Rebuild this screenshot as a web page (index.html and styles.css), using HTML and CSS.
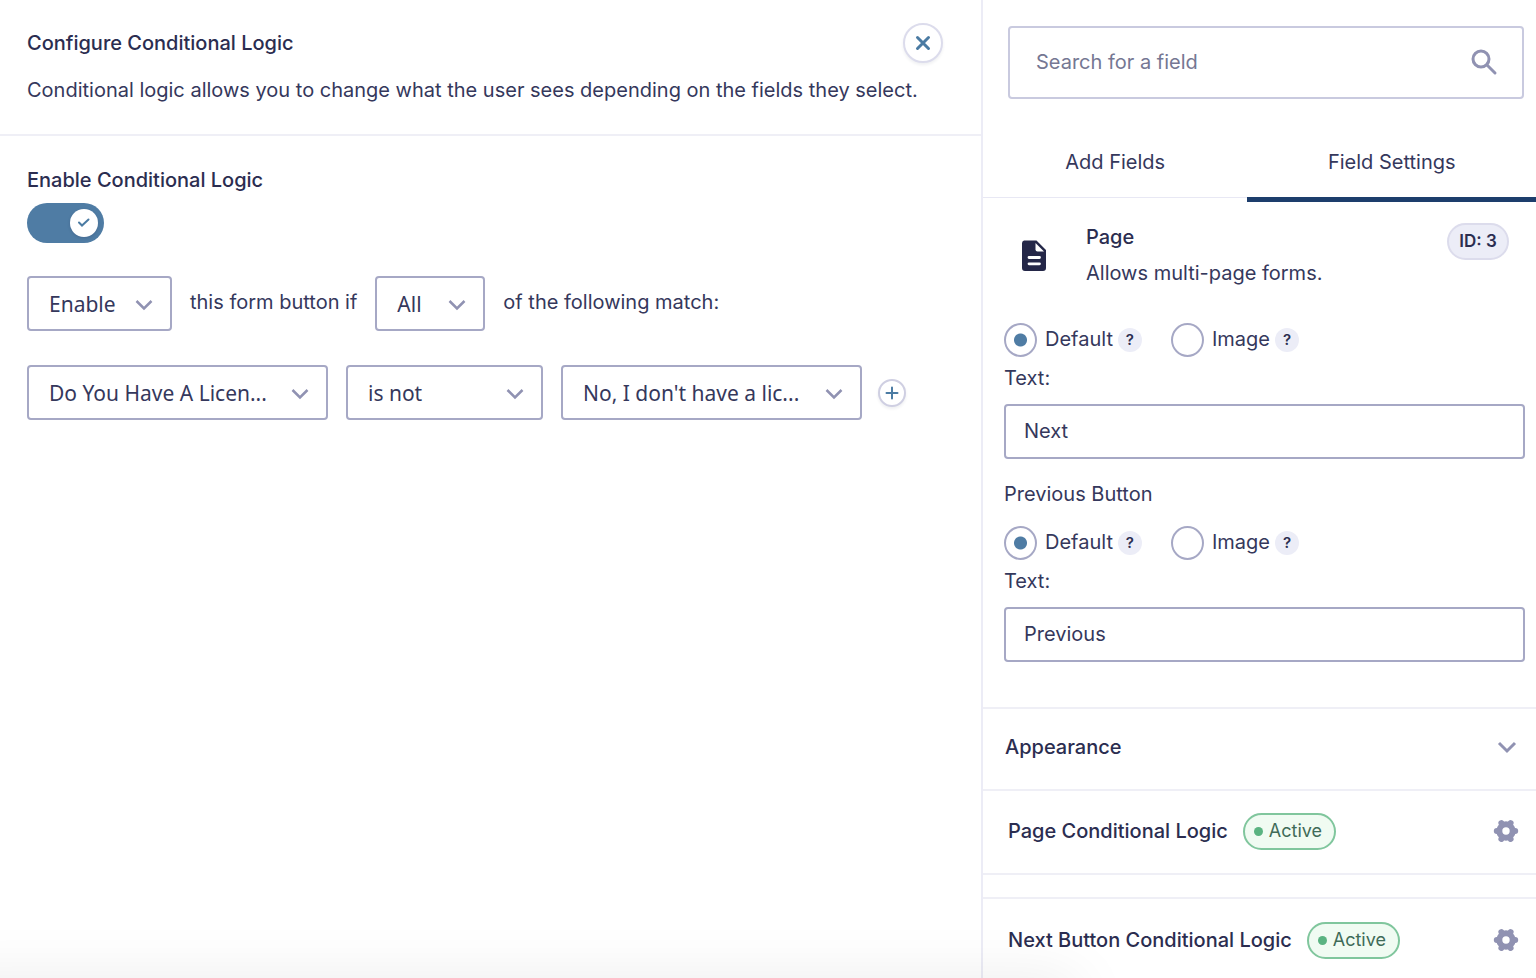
FILE: index.html
```html
<!DOCTYPE html>
<html lang="en">
<head>
  <meta charset="UTF-8" />
  <meta name="viewport" content="width=device-width, initial-scale=1.0"/>
  <title>Configure Conditional Logic</title>
  <link rel="stylesheet" href="styles.css">
</head>
<body>

  <div class="editor">

    <!-- Conditional logic flyout -->
    <main class="flyout">
      <header class="flyout-header">
        <div>
          <h1>Configure Conditional Logic</h1>
          <p>Conditional logic allows you to change what the user sees depending on the fields they select.</p>
        </div>
        <button class="close" type="button" aria-label="Close">
          <svg width="16" height="16" viewBox="0 0 16 16"><path d="M2.500 2.500l11 11M13.500 2.500l-11 11"/></svg>
        </button>
      </header>

      <div class="flyout-body">
        <label class="section-label" for="enableLogic">Enable Conditional Logic</label>
        <div class="toggle">
          <input type="checkbox" id="enableLogic" checked>
          <span class="knob">
            <svg width="14" height="12" viewBox="0 0 14 12"><path d="M2 5.500l3 3 6.500-6"/></svg>
          </span>
        </div>

        <div class="sentence">
          <div class="select enable">
            <select aria-label="Action"><option>Enable</option><option>Disable</option></select>
            <svg width="18" height="12" viewBox="0 0 18 12"><path d="M1.500 2l7.500 7.500 7.500-7.500"/></svg>
          </div>
          <span>this form button if</span>
          <div class="select all">
            <select aria-label="Match type"><option>All</option><option>Any</option></select>
            <svg width="18" height="12" viewBox="0 0 18 12"><path d="M1.500 2l7.500 7.500 7.500-7.500"/></svg>
          </div>
          <span>of the following match:</span>
        </div>

        <div class="rule">
          <div class="select wide">
            <select aria-label="Field"><option>Do You Have A Licen...</option></select>
            <svg width="18" height="12" viewBox="0 0 18 12"><path d="M1.500 2l7.500 7.500 7.500-7.500"/></svg>
          </div>
          <div class="select operator">
            <select aria-label="Operator"><option>is not</option><option>is</option></select>
            <svg width="18" height="12" viewBox="0 0 18 12"><path d="M1.500 2l7.500 7.500 7.500-7.500"/></svg>
          </div>
          <div class="select wide">
            <select aria-label="Value"><option>No, I don't have a lic...</option></select>
            <svg width="18" height="12" viewBox="0 0 18 12"><path d="M1.500 2l7.500 7.500 7.500-7.500"/></svg>
          </div>
          <button class="add" type="button" aria-label="Add rule">
            <svg width="14" height="14" viewBox="0 0 14 14"><path d="M7 1.500v11M1.500 7h11"/></svg>
          </button>
        </div>
      </div>
    </main>

    <!-- Field settings sidebar -->
    <aside class="sidebar">
      <div class="search">
        <input type="text" placeholder="Search for a field" aria-label="Search for a field">
        <svg width="28" height="28" viewBox="0 0 28 28"><circle cx="11" cy="11" r="8"/><path d="M17 17l8 8"/></svg>
      </div>

      <nav class="tabs">
        <a href="#add">Add Fields</a>
        <a href="#settings" class="active">Field Settings</a>
      </nav>

      <section class="field-info">
        <svg class="page-icon" width="26" height="32" viewBox="0 0 26 32">
          <path fill="#242748" d="M3 .5h12.500L25 10v18a3 3 0 0 1-3 3H4a3 3 0 0 1-3-3V3.500a3 3 0 0 1 2-3z"/>
          <path fill="#fff" d="M14.500 3v6.500a2 2 0 0 0 2 2H23z"/>
          <path stroke="#fff" stroke-width="2.800" stroke-linecap="round" d="M8 17.500h10.500M8 23.800h10.500"/>
        </svg>
        <div class="field-text">
          <h2>Page</h2>
          <p>Allows multi-page forms.</p>
        </div>
        <span class="field-id">ID: 3</span>
      </section>

      <section class="settings">
        <div class="radios">
          <input type="radio" name="next" id="nextDefault" checked>
          <label for="nextDefault">Default</label>
          <button class="help" type="button">?</button>
          <input type="radio" name="next" id="nextImage">
          <label for="nextImage">Image</label>
          <button class="help" type="button">?</button>
        </div>
        <label class="text-label" for="nextText">Text:</label>
        <input class="text-input" type="text" id="nextText" value="Next">

        <h3>Previous Button</h3>
        <div class="radios">
          <input type="radio" name="prev" id="prevDefault" checked>
          <label for="prevDefault">Default</label>
          <button class="help" type="button">?</button>
          <input type="radio" name="prev" id="prevImage">
          <label for="prevImage">Image</label>
          <button class="help" type="button">?</button>
        </div>
        <label class="text-label" for="prevText">Text:</label>
        <input class="text-input" type="text" id="prevText" value="Previous">
      </section>

      <button class="panel appearance" type="button">
        <span>Appearance</span>
        <svg class="chevron" width="20" height="14" viewBox="0 0 20 14"><path d="M2 3l8 8 8-8"/></svg>
      </button>

      <button class="panel page-logic" type="button">
        <span>Page Conditional Logic</span>
        <span class="status">Active</span>
        <svg class="gear" width="26" height="26" viewBox="-13 -13 26 26">
          <circle r="6.700"/>
          <path d="M8 0h1.200M-8 0h-1.200M4 6.930l.6 1.040M-4 6.930l-.6 1.040M4-6.930l.6-1.040M-4-6.930l-.6-1.040"/>
        </svg>
      </button>

      <button class="panel" type="button">
        <span>Next Button Conditional Logic</span>
        <span class="status">Active</span>
        <svg class="gear" width="26" height="26" viewBox="-13 -13 26 26">
          <circle r="6.700"/>
          <path d="M8 0h1.200M-8 0h-1.200M4 6.930l.6 1.040M-4 6.930l-.6 1.040M4-6.930l.6-1.040M-4-6.930l-.6-1.040"/>
        </svg>
      </button>
    </aside>

  </div>

</body>
</html>
```
FILE: styles.css
```css
/* Global Styles */
* {
  box-sizing: border-box;
}
body {
  margin: 0;
  background: #fff;
  color: #35385c;
  font-family: Inter, sans-serif;
  font-size: 20px;
  line-height: 24px;
}
/* soft shadow of the bar just below the window */
body::after {
  content: "";
  position: fixed;
  top: 100%;
  left: -60px;
  width: 74%;
  height: 60px;
  box-shadow: 0 0 60px rgba(0, 0, 0, 0.08);
  pointer-events: none;
}
h1, h2, h3, p {
  margin: 0;
  font-size: 20px;
  font-weight: 400;
}
h1, h2 {
  color: #2b2d50;
  font-weight: 500;
}
button, input, select {
  font: inherit;
  color: inherit;
}
button {
  padding: 0;
  border: 0;
  background: none;
  cursor: pointer;
}
svg {
  flex: none;
  fill: none;
}
.editor {
  display: grid;
  grid-template-columns: minmax(0, 1fr) 555px;
  min-height: 100vh;
}

/* Flyout */
.flyout-header {
  display: flex;
  justify-content: space-between;
  align-items: flex-start;
  padding: 23px 38px 32px 27px;
  border-bottom: 2px solid #efeff6;
}
.flyout-header h1 {
  padding-top: 8px;
  margin-bottom: 23px;
}
.close, .add {
  display: flex;
  justify-content: center;
  align-items: center;
  flex: none;
  background: #fff;
  border-radius: 50%;
}
.close {
  width: 40px;
  height: 40px;
  margin-left: -40px;
  border: 2px solid #dcdcec;
  box-shadow: 0 2px 3px rgba(35, 37, 70, 0.07);
}
.close svg {
  stroke: #4b7ba3;
  stroke-width: 3;
  stroke-linecap: round;
}
.flyout-body {
  padding: 32px 27px;
}
.section-label {
  display: block;
  color: #2b2d50;
  font-weight: 500;
}
.toggle {
  position: relative;
  width: 77px;
  height: 40px;
  margin: 11px 0 33px;
}
.toggle input {
  appearance: none;
  display: block;
  width: 100%;
  height: 100%;
  margin: 0;
  background: #4f7ca4;
  border-radius: 20px;
}
.knob {
  position: absolute;
  top: 6px;
  right: 6px;
  display: flex;
  justify-content: center;
  align-items: center;
  width: 28px;
  height: 28px;
  background: #fff;
  border-radius: 50%;
  box-shadow: 0 1px 3px rgba(35, 37, 70, 0.2);
  pointer-events: none;
}
.knob svg {
  stroke: #4b7ba3;
  stroke-width: 2;
  stroke-linecap: round;
}
.sentence, .rule {
  display: flex;
  align-items: center;
  gap: 18px;
}
.sentence {
  margin-bottom: 34px;
}
.sentence > span {
  padding-bottom: 4px;
}
.select {
  position: relative;
}
.select.enable { width: 145px; }
.select.all { width: 110px; }
.select.wide { width: 301px; }
.select.operator { width: 197px; }
.select select {
  appearance: none;
  display: block;
  width: 100%;
  height: 55px;
  padding: 0 36px 0 20px;
  background: #fff;
  border: 2px solid #a6a8c5;
  border-radius: 4px;
  font-family: "Noto Sans", sans-serif;
  font-size: 21px;
}
.select svg {
  position: absolute;
  top: 23px;
  right: 19px;
  pointer-events: none;
}
.select svg, .chevron {
  stroke: #9092b2;
  stroke-width: 2.5;
}
.chevron {
  stroke-width: 3;
}
.add {
  width: 28px;
  height: 28px;
  margin-left: -2px;
  border: 2px solid #cfcfe2;
  box-shadow: 0 2px 3px rgba(35, 37, 70, 0.07);
}
.add svg {
  stroke: #4b7ba3;
  stroke-width: 2;
  stroke-linecap: round;
}

/* Sidebar */
.sidebar {
  border-left: 2px solid #ececf6;
}
.search {
  position: relative;
  margin: 26px 12px 0 25px;
}
.search input {
  display: block;
  width: 100%;
  height: 73px;
  padding: 0 70px 2px 26px;
  border: 2px solid #c9cadf;
  border-radius: 4px;
}
.search input::placeholder {
  color: #757793;
  opacity: 1;
}
.search svg {
  position: absolute;
  top: 22px;
  right: 26px;
  stroke: #9092b2;
  stroke-width: 3;
  stroke-linecap: round;
}
.tabs {
  display: grid;
  grid-template-columns: 11fr 12fr;
  height: 104px;
  padding-top: 27px;
}
.tabs a {
  height: 72px;
  padding-top: 24px;
  border-bottom: 1px solid #e8e8f4;
  color: inherit;
  text-align: center;
  text-decoration: none;
}
.tabs a.active {
  height: 76px;
  border-bottom: 5px solid #1d3e6c;
}
.field-info {
  display: flex;
  align-items: flex-start;
  padding: 16px 27px 0 38px;
  line-height: 36px;
}
.page-icon {
  margin-top: 21px;
}
.field-text {
  flex: 1;
  padding-left: 39px;
}
.field-id {
  width: 62px;
  margin-top: 4px;
  background: #ecedf7;
  border: 2px solid #dcdcec;
  border-radius: 19px;
  color: #2b2d50;
  font-size: 17px;
  font-weight: 600;
  line-height: 33px;
  text-align: center;
}
.settings {
  padding: 32px 11px 45px 21px;
}
.radios {
  display: flex;
  align-items: center;
  height: 34px;
}
.radios input {
  appearance: none;
  width: 33px;
  height: 34px;
  margin: 0 8px 0 0;
  background: #fff;
  border: 2px solid #a6a8c5;
  border-radius: 50%;
}
.radios input:checked {
  background: radial-gradient(circle, #4f7ca4 6px, #fff 7px);
}
.radios label {
  padding-bottom: 2px;
}
.help {
  width: 24px;
  height: 24px;
  margin: 0 29px 0 5px;
  background: #ecedf7;
  border-radius: 50%;
  color: #2b2d50;
  font-size: 15px;
  font-weight: 600;
}
.text-label {
  display: block;
  margin: 9px 0 14px;
}
.text-input {
  display: block;
  width: 100%;
  height: 55px;
  padding: 0 18px 2px;
  background: #fff;
  border: 2px solid #a6a8c5;
  border-radius: 4px;
}
.settings h3 {
  margin: 23px 0 20px;
}
.panel {
  display: flex;
  align-items: center;
  width: 100%;
  height: 84px;
  padding: 0 17px 0 25px;
  border-top: 2px solid #efeff6;
  color: #2b2d50;
  font-weight: 500;
}
.panel.appearance {
  height: 82px;
  padding: 0 19px 4px 22px;
}
.panel.page-logic {
  height: 86px;
  margin-bottom: 22px;
  padding-bottom: 2px;
  border-bottom: 2px solid #efeff6;
}
.panel > span:first-child {
  padding-bottom: 1px;
}
.status {
  display: flex;
  align-items: center;
  gap: 6px;
  height: 37px;
  margin-left: 15px;
  padding: 0 12px 0 9px;
  background: #f0fbf2;
  border: 2px solid #80c69d;
  border-radius: 19px;
  color: #3f6b58;
  font-size: 18px;
  font-weight: 400;
}
.status::before {
  content: "";
  width: 9px;
  height: 9px;
  background: #5ab381;
  border-radius: 50%;
}
.chevron, .gear {
  margin-left: auto;
}
.gear {
  stroke: #9092b2;
  stroke-width: 6;
  stroke-linecap: round;
}
```
